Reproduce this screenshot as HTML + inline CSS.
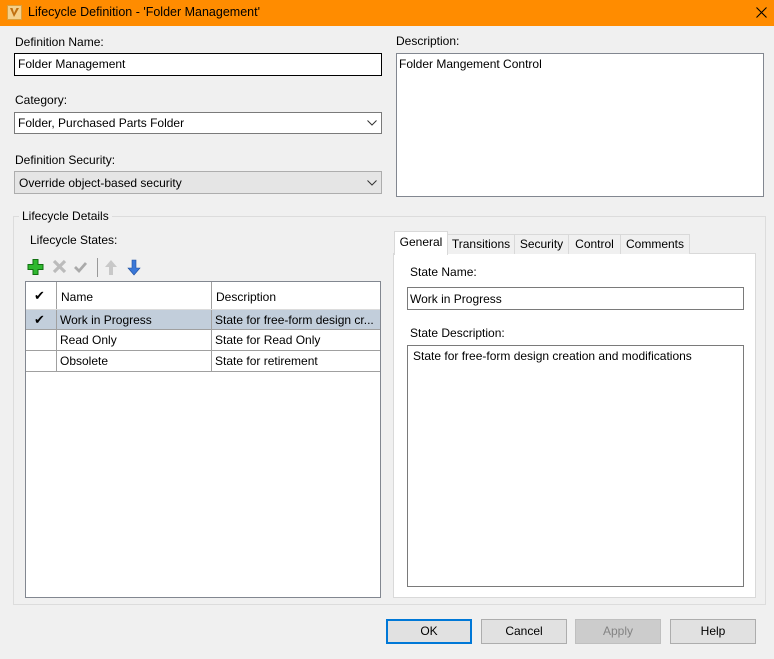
<!DOCTYPE html>
<html><head><meta charset="utf-8"><style>
*{box-sizing:border-box;margin:0;padding:0}
body{width:774px;height:659px;background:#f0f0f0;font-family:"Liberation Sans",sans-serif;font-size:12px;color:#000;position:relative;overflow:hidden}
.a{position:absolute}
.lbl{position:absolute;white-space:nowrap}
.box{position:absolute;background:#fff;border:1px solid #7a7a7a}
.txt{position:absolute;white-space:nowrap}
.chev{position:absolute;right:4px;top:4px}
.btn{position:absolute;top:619px;height:25px;width:86px;border:1px solid #adadad;background:#e1e1e1;text-align:center;line-height:23px}
.tab{position:absolute;top:234px;height:20px;border:1px solid #d9d9d9;border-bottom:none;background:#f0f0f0;line-height:18px;text-align:center}
.row{position:absolute;left:26px;width:354px;height:21px;border-bottom:1px solid #a0a0a0;line-height:20px}
.c1{position:absolute;left:30px;top:0;bottom:0;border-left:1px solid #a0a0a0}
.c2{position:absolute;left:185px;top:0;bottom:0;border-left:1px solid #a0a0a0}
</style></head><body>
<div class="a" style="left:0;top:0;width:774px;height:26px;background:#ff8c00"></div>
<div class="a" style="left:7px;top:5px;width:15px;height:15px;background:#f5d08a;border:1px solid #d9a040"></div>
<svg class="a" style="left:7px;top:5px" width="15" height="15"><path d="M3 3 L7 12 L12 3 L9.5 3 L7 8 L5.5 3Z" fill="#c07010"/></svg>
<div class="txt" style="left:28px;top:5px;font-size:12.5px">Lifecycle Definition - 'Folder Management'</div>
<svg class="a" style="left:756px;top:7px" width="11" height="11"><path d="M0.5 0.5L10.5 10.5M10.5 0.5L0.5 10.5" stroke="#000" stroke-width="1.1"/></svg>

<div class="lbl" style="left:15px;top:35px">Definition Name:</div>
<div class="box" style="left:14px;top:53px;width:368px;height:23px;border-color:#000"><div class="txt" style="left:3px;top:3px">Folder Management</div></div>
<div class="lbl" style="left:15px;top:93px">Category:</div>
<div class="box" style="left:14px;top:112px;width:368px;height:22px"><div class="txt" style="left:3px;top:3px">Folder, Purchased Parts Folder</div>
<svg class="chev" style="top:7px;right:4px" width="10" height="6"><path d="M0.5 0.5L5 5L9.5 0.5" stroke="#333" fill="none"/></svg></div>
<div class="lbl" style="left:15px;top:153px">Definition Security:</div>
<div class="box" style="left:14px;top:171px;width:368px;height:23px;background:#e5e5e5;border-color:#adadad"><div class="txt" style="left:4px;top:4px">Override object-based security</div>
<svg class="chev" style="top:8px;right:4px" width="10" height="6"><path d="M0.5 0.5L5 5L9.5 0.5" stroke="#333" fill="none"/></svg></div>

<div class="lbl" style="left:396px;top:34px">Description:</div>
<div class="box" style="left:396px;top:53px;width:368px;height:144px;border-color:#828790"><div class="txt" style="left:2px;top:3px">Folder Mangement Control</div></div>

<div class="a" style="left:13px;top:216px;width:753px;height:389px;border:1px solid #dcdcdc"></div>
<div class="lbl" style="left:19px;top:209px;background:#f0f0f0;padding:0 3px">Lifecycle Details</div>
<div class="lbl" style="left:30px;top:233px">Lifecycle States:</div>

<svg class="a" style="left:26px;top:258px" width="120" height="20">
<path d="M7 1.5h5v5h5v5h-5v5h-5v-5h-5v-5h5z" fill="#2fb82f" stroke="#107010"/>
<path d="M28 3l11 11M39 3l-11 11" stroke="#bbb" stroke-width="3.2"/>
<path d="M49 9l4 4l7-8" stroke="#aaa" stroke-width="2.8" fill="none"/>
<path d="M71.5 0v19" stroke="#999"/>
<path d="M85 2l-6 7h4v8h4v-8h4z" fill="#c8c8c8"/>
<path d="M108 17l6-7h-4v-8h-4v8h-4z" fill="#3a78d8" stroke="#1f4fa0" stroke-width="0.6"/>
</svg>

<div class="box" style="left:25px;top:281px;width:356px;height:317px;border-color:#828790"></div>
<div class="row" style="top:282px;height:27px;line-height:27px;border-bottom:none;background:#fff"><div class="c1"></div><div class="c2"></div>
<div class="txt" style="left:8px;font-size:13px">✔</div><div class="txt" style="left:35px;top:2px">Name</div><div class="txt" style="left:190px;top:2px">Description</div></div>
<div class="row" style="top:309px;background:#c2cedb;border-top:1px solid #dcdcdc"><div class="c1"></div><div class="c2"></div>
<div class="txt" style="left:8px;font-size:13px">✔</div><div class="txt" style="left:34px">Work in Progress</div><div class="txt" style="left:189px">State for free-form design cr...</div></div>
<div class="row" style="top:330px"><div class="c1"></div><div class="c2"></div><div class="txt" style="left:34px">Read Only</div><div class="txt" style="left:189px">State for Read Only</div></div>
<div class="row" style="top:351px"><div class="c1"></div><div class="c2"></div><div class="txt" style="left:34px">Obsolete</div><div class="txt" style="left:189px">State for retirement</div></div>

<div class="a" style="left:393px;top:253px;width:363px;height:345px;background:#fff;border:1px solid #d9d9d9"></div>
<div class="tab" style="left:447px;width:68px">Transitions</div>
<div class="tab" style="left:514px;width:55px">Security</div>
<div class="tab" style="left:568px;width:53px">Control</div>
<div class="tab" style="left:620px;width:70px">Comments</div>
<div class="tab" style="left:394px;top:231px;width:54px;height:24px;background:#fff;line-height:20px">General</div>

<div class="lbl" style="left:410px;top:265px">State Name:</div>
<div class="box" style="left:407px;top:287px;width:337px;height:23px"><div class="txt" style="left:2px;top:4px">Work in Progress</div></div>
<div class="lbl" style="left:410px;top:326px">State Description:</div>
<div class="box" style="left:407px;top:345px;width:337px;height:242px"><div class="txt" style="left:5px;top:3px">State for free-form design creation and modifications</div></div>

<div class="btn" style="left:386px;border:2px solid #0078d7;line-height:21px">OK</div>
<div class="btn" style="left:481px">Cancel</div>
<div class="btn" style="left:575px;background:#cccccc;border-color:#bfbfbf;color:#838383">Apply</div>
<div class="btn" style="left:670px">Help</div>
</body></html>
